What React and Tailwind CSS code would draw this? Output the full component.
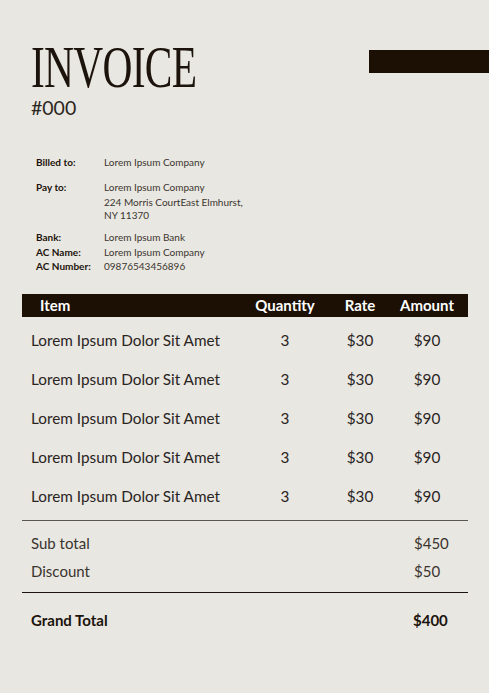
const rows = [1, 2, 3, 4, 5];

export default function App() {
  return (
    <div
      className="min-h-screen w-full bg-[#e9e7e1] text-[#1c140c]"
      style={{ fontFamily: "Lato, 'Noto Sans', sans-serif" }}
    >
      {/* header */}
      <div className="flex justify-between pt-[38px]">
        <div className="pl-[31px] pt-[4px]">
          <div
            className="origin-left scale-x-[0.69] text-[60px] leading-[50px] tracking-[-1px] text-[#1c140c] whitespace-nowrap"
            style={{ fontFamily: "'Liberation Serif', serif" }}
          >
            INVOICE
          </div>
          <div className="mt-[5px] text-[19.5px] leading-[22px] text-[#2b2520]">#000</div>
        </div>
        <div className="mt-[12px] h-[23px] w-[120px] bg-[#1c1005]" />
      </div>

      {/* billing info */}
      <div className="mt-[37px] pl-[36px] text-[10px] leading-[13px]">
        <div className="flex">
          <div className="w-[68px] font-bold">Billed to:</div>
          <div className="text-[#3b352f]">Lorem Ipsum Company</div>
        </div>
        <div className="mt-[12px] flex">
          <div className="w-[68px] font-bold">Pay to:</div>
          <div className="text-[#3b352f]">
            <div>Lorem Ipsum Company</div>
            <div className="mt-[2px]">224 Morris CourtEast Elmhurst,</div>
            <div>NY 11370</div>
          </div>
        </div>
        <div className="mt-[8px] flex leading-[14.5px]">
          <div className="w-[68px] font-bold">
            <div>Bank:</div>
            <div>AC Name:</div>
            <div>AC Number:</div>
          </div>
          <div className="text-[#3b352f]">
            <div>Lorem Ipsum Bank</div>
            <div>Lorem Ipsum Company</div>
            <div>09876543456896</div>
          </div>
        </div>
      </div>

      {/* table */}
      <div className="mx-[22px] mt-[20px] w-[446px]">
        <div className="grid h-[23px] grid-cols-[226px_74px_76px_58px] items-center bg-[#1c1005] text-[15px] font-bold text-white">
          <div className="pl-[18px]">Item</div>
          <div className="text-center whitespace-nowrap">Quantity</div>
          <div className="text-center">Rate</div>
          <div className="text-center whitespace-nowrap">Amount</div>
        </div>
        <div className="pt-[4px] pb-[4px]">
          {rows.map((r) => (
            <div
              key={r}
              className="grid h-[39px] grid-cols-[226px_74px_76px_58px] items-center text-[15.3px] text-[#2a241f]"
            >
              <div className="pl-[9px] whitespace-nowrap">Lorem Ipsum Dolor Sit Amet</div>
              <div className="text-center">3</div>
              <div className="text-center">$30</div>
              <div className="text-center">$90</div>
            </div>
          ))}
        </div>
        <div className="h-px bg-[#5a5650]" />
        <div className="pt-[12px] pb-[10px] text-[15px] text-[#3a342e]">
          <div className="flex h-[21px] items-center">
            <div className="pl-[9px]">Sub total</div>
            <div className="ml-auto w-[54px]">$450</div>
          </div>
          <div className="mt-[7px] flex h-[21px] items-center">
            <div className="pl-[9px]">Discount</div>
            <div className="ml-auto w-[54px]">$50</div>
          </div>
        </div>
        <div className="h-px bg-[#1c140c]" />
        <div className="flex h-[56px] items-center text-[15px] font-bold text-[#1c140c]">
          <div className="pl-[9px]">Grand Total</div>
          <div className="ml-auto w-[55px]">$400</div>
        </div>
      </div>
    </div>
  );
}
